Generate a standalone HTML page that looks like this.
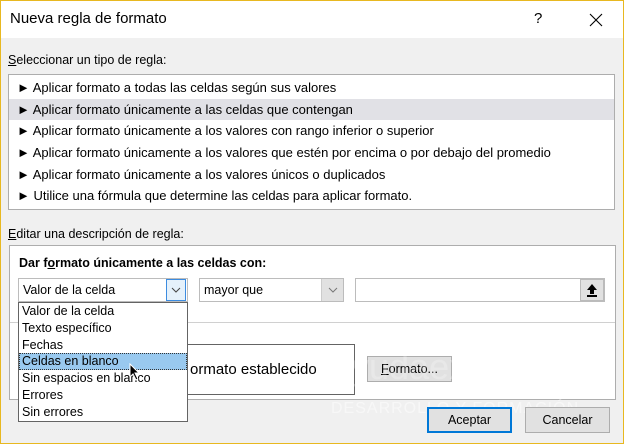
<!DOCTYPE html>
<html><head><meta charset="utf-8"><style>
*{box-sizing:border-box;margin:0;padding:0}
body{width:624px;height:444px;overflow:hidden;font-family:"Liberation Sans",sans-serif;font-size:12.5px;color:#000;background:#f0f0f0}
.win{position:absolute;left:0;top:0;width:624px;height:444px;border:1px solid #e8b820;background:#f0f0f0}
.title{position:absolute;left:0;top:0;width:622px;height:37px;background:#fff}
.abs{position:absolute;white-space:nowrap}
.list{position:absolute;left:7px;top:73px;width:607px;height:136px;background:#fff;border:1px solid #adadad;padding-top:2px;font-size:13px}
.row{height:21.7px;line-height:21.7px;padding-left:8px}
.row.sel{background:#e1e1e6}
.panel{position:absolute;left:8px;top:244px;width:607px;height:155px;background:#fff;border:1px solid #adadad}
.combo{position:absolute;height:24px;border:1px solid #bcbcbc;background:#fff;line-height:22px;padding-left:4px}
.btn{position:absolute;height:26px;border:1px solid #adadad;background:#e1e1e1;text-align:center;line-height:24px}
.dd{position:absolute;left:17px;top:301px;width:170px;height:120px;background:#fff;border:1px solid #646464}
.dd div{height:16.8px;line-height:16.8px;padding-left:3px}
</style></head><body><div class="win">
<div class="title"></div>
<div class="abs" style="left:9px;top:9px;font-size:15px">Nueva regla de formato</div>
<div class="abs" style="left:533px;top:9px;font-size:15px">?</div>
<svg class="abs" style="left:588px;top:12px" width="14" height="14"><path d="M1 1L13 13M13 1L1 13" stroke="#000" stroke-width="1.1"/></svg>
<div class="abs" style="left:7px;top:52px"><u>S</u>eleccionar un tipo de regla:</div>
<div class="list">
<div class="row">► Aplicar formato a todas las celdas según sus valores</div>
<div class="row sel">► Aplicar formato únicamente a las celdas que contengan</div>
<div class="row">► Aplicar formato únicamente a los valores con rango inferior o superior</div>
<div class="row">► Aplicar formato únicamente a los valores que estén por encima o por debajo del promedio</div>
<div class="row">► Aplicar formato únicamente a los valores únicos o duplicados</div>
<div class="row">► Utilice una fórmula que determine las celdas para aplicar formato.</div>
</div>
<div class="abs" style="left:7px;top:226px"><u>E</u>ditar una descripción de regla:</div>
<div class="panel"></div>
<div class="abs" style="left:18px;top:255px;font-weight:bold">Dar f<u>o</u>rmato únicamente a las celdas con:</div>
<div class="combo" style="left:17px;top:277px;width:170px">Valor de la celda</div>
<div class="abs" style="left:165px;top:278px;width:20px;height:22px;border:1px solid #3c8ce0;background:#e5f1fb"><svg width="18" height="20"><path d="M5 8L9 12L13 8" fill="none" stroke="#444" stroke-width="1"/></svg></div>
<div class="combo" style="left:198px;top:277px;width:145px">mayor que</div>
<div class="abs" style="left:320px;top:278px;width:22px;height:22px;background:#e1e1e1;border-left:1px solid #ccc"><svg width="22" height="22"><path d="M7 9L11 13L15 9" fill="none" stroke="#777" stroke-width="1"/></svg></div>
<div class="combo" style="left:354px;top:277px;width:250px"></div>
<div class="abs" style="left:579px;top:278px;width:24px;height:22px;background:#e1e1e1;border:1px solid #bbb"><svg width="22" height="20"><path d="M11 4L6 10H9V14H13V10H16Z" fill="#000"/><rect x="6" y="15" width="10" height="2" fill="#000"/></svg></div>
<div class="abs" style="left:9px;top:321px;width:605px;height:1px;background:#d0d0d0"></div>
<div class="abs" style="left:186px;top:343px;width:168px;height:51px;background:#fff;border:1px solid #646464;font-size:15px;line-height:49px;padding-left:2px">ormato establecido</div>
<div class="btn" style="left:366px;top:355px;width:85px;font-size:12.5px"><u>F</u>ormato...</div>
<div class="abs" style="left:330px;top:399px;font-size:16px;color:#fff;opacity:.5;letter-spacing:1px">DESARROLLO Y FORMACIÓN</div>
<div class="abs" style="left:330px;top:345px;font-size:36px;color:#fff;opacity:.25">ayudaexcel</div>
<div class="btn" style="left:426px;top:406px;width:85px;border:2px solid #0078d7;line-height:22px">Aceptar</div>
<div class="btn" style="left:524px;top:406px;width:85px">Cancelar</div>
<div class="dd">
<div>Valor de la celda</div><div>Texto específico</div><div>Fechas</div>
<div style="background:#99c9ef;outline:1px dotted #333;outline-offset:-1px">Celdas en blanco</div>
<div>Sin espacios en blanco</div><div>Errores</div><div>Sin errores</div>
</div>
<svg class="abs" style="left:128px;top:362px" width="12" height="18" viewBox="0 0 12 18"><path d="M1 1 L1 14 L4 11 L7 17 L9 16 L6 10 L10 10 Z" fill="#000" stroke="#fff" stroke-width="1"/></svg>
</div></body></html>
